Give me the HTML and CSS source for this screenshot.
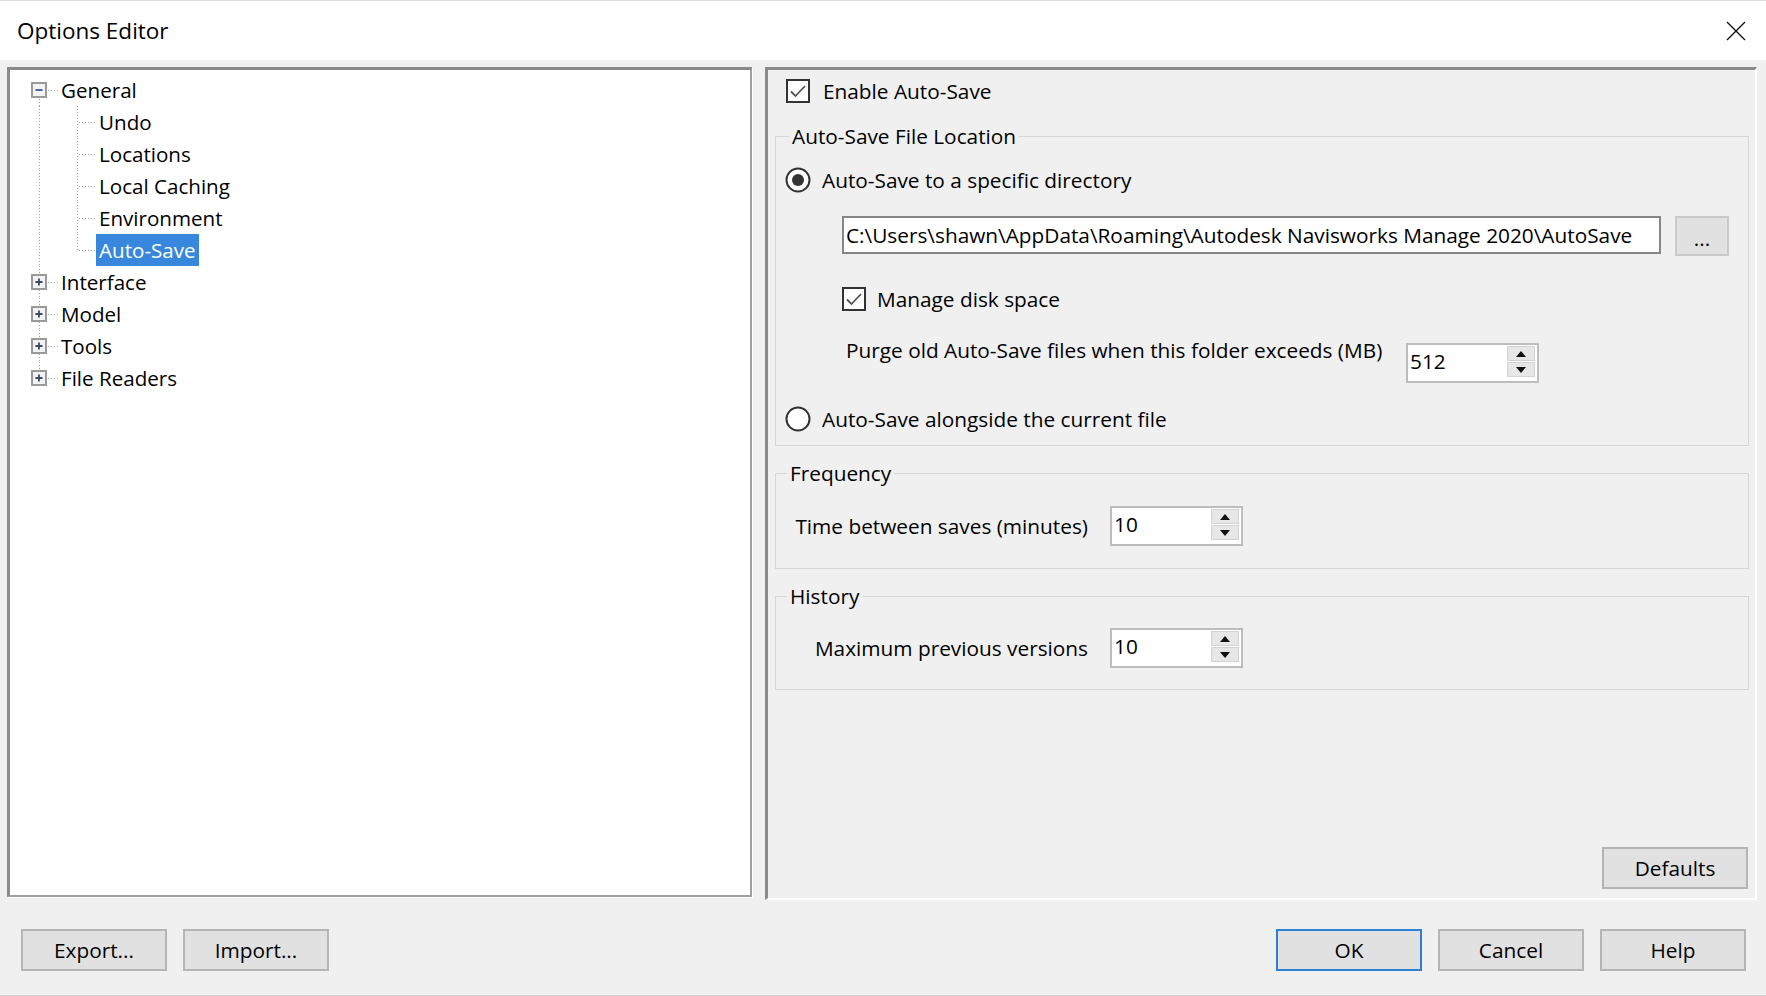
FILE: index.html
```html
<!DOCTYPE html>
<html>
<head>
<meta charset="utf-8">
<title>Options Editor</title>
<link rel="stylesheet" href="styles.css">
</head>
<body>
<div class="window">
  <div class="titlebar">
    <span class="title">Options Editor</span>
    <svg class="close" width="20" height="20" viewBox="0 0 20 20"><path d="M1 1L19 19M19 1L1 19" stroke="#111" stroke-width="1.4" fill="none"/></svg>
  </div>

  <div class="main">
    <div class="tree-panel">
      <div class="tree">
        <div class="row"><span class="gut v-bot"><svg class="exp" width="16" height="16" viewBox="0 0 16 16"><rect x="1" y="1" width="14" height="14" fill="#f3f3f3" stroke="#9a9a9a" stroke-width="2"/><path d="M4.5 8H11.5" stroke="#3b5998" stroke-width="1.8"/></svg></span><span class="hd"></span><span class="lbl">General</span></div>
        <div class="row"><span class="gut v-full"></span><span class="sp"></span><span class="cg cg-full"></span><span class="lbl">Undo</span></div>
        <div class="row"><span class="gut v-full"></span><span class="sp"></span><span class="cg cg-full"></span><span class="lbl">Locations</span></div>
        <div class="row"><span class="gut v-full"></span><span class="sp"></span><span class="cg cg-full"></span><span class="lbl">Local Caching</span></div>
        <div class="row"><span class="gut v-full"></span><span class="sp"></span><span class="cg cg-full"></span><span class="lbl">Environment</span></div>
        <div class="row"><span class="gut v-full"></span><span class="sp"></span><span class="cg cg-top"></span><span class="lbl sel">Auto-Save</span></div>
        <div class="row"><span class="gut v-full"><svg class="exp" width="16" height="16" viewBox="0 0 16 16"><rect x="1" y="1" width="14" height="14" fill="#f3f3f3" stroke="#9a9a9a" stroke-width="2"/><path d="M4.5 8H11.5M8 4.5V11.5" stroke="#3b4a6b" stroke-width="1.8"/></svg></span><span class="hd"></span><span class="lbl">Interface</span></div>
        <div class="row"><span class="gut v-full"><svg class="exp" width="16" height="16" viewBox="0 0 16 16"><rect x="1" y="1" width="14" height="14" fill="#f3f3f3" stroke="#9a9a9a" stroke-width="2"/><path d="M4.5 8H11.5M8 4.5V11.5" stroke="#3b4a6b" stroke-width="1.8"/></svg></span><span class="hd"></span><span class="lbl">Model</span></div>
        <div class="row"><span class="gut v-full"><svg class="exp" width="16" height="16" viewBox="0 0 16 16"><rect x="1" y="1" width="14" height="14" fill="#f3f3f3" stroke="#9a9a9a" stroke-width="2"/><path d="M4.5 8H11.5M8 4.5V11.5" stroke="#3b4a6b" stroke-width="1.8"/></svg></span><span class="hd"></span><span class="lbl">Tools</span></div>
        <div class="row"><span class="gut v-top"><svg class="exp" width="16" height="16" viewBox="0 0 16 16"><rect x="1" y="1" width="14" height="14" fill="#f3f3f3" stroke="#9a9a9a" stroke-width="2"/><path d="M4.5 8H11.5M8 4.5V11.5" stroke="#3b4a6b" stroke-width="1.8"/></svg></span><span class="hd"></span><span class="lbl">File Readers</span></div>
      </div>
    </div>

    <div class="opts-panel">
      <div class="head-row">
        <svg class="cb" width="24" height="24" viewBox="0 0 24 24"><rect x="1" y="1" width="22" height="22" fill="#fff" stroke="#333" stroke-width="2"/><path d="M5 12.5L9.5 17L19 7" fill="none" stroke="#555" stroke-width="1.8"/></svg>
        <span class="cb-text">Enable Auto-Save</span>
      </div>

      <fieldset class="group g-loc">
        <legend>Auto-Save File Location</legend>
        <div class="radio-row r1">
          <svg class="rb" width="26" height="26" viewBox="0 0 26 26"><circle cx="13" cy="13" r="11.5" fill="#fff" stroke="#333" stroke-width="2"/><circle cx="13" cy="13" r="6" fill="#333"/></svg>
          <span>Auto-Save to a specific directory</span>
        </div>
        <div class="path-row">
          <div class="path">C:\Users\shawn\AppData\Roaming\Autodesk Navisworks Manage 2020\AutoSave</div>
          <div class="browse">...</div>
        </div>
        <div class="check-row">
          <svg class="cb" width="24" height="24" viewBox="0 0 24 24"><rect x="1" y="1" width="22" height="22" fill="#fff" stroke="#333" stroke-width="2"/><path d="M5 12.5L9.5 17L19 7" fill="none" stroke="#555" stroke-width="1.8"/></svg>
          <span class="cb-text2">Manage disk space</span>
        </div>
        <div class="purge-row">
          <span class="purge-label">Purge old Auto-Save files when this folder exceeds (MB)</span>
          <div class="spin">
            <span class="spin-val">512</span>
            <span class="spin-btns">
              <span class="sb"><svg width="10" height="6" viewBox="0 0 10 6"><path d="M0 6L5 0L10 6Z" fill="#111"/></svg></span>
              <span class="sb"><svg width="10" height="6" viewBox="0 0 10 6"><path d="M0 0L5 6L10 0Z" fill="#111"/></svg></span>
            </span>
          </div>
        </div>
        <div class="radio-row r2">
          <svg class="rb" width="26" height="26" viewBox="0 0 26 26"><circle cx="13" cy="13" r="11.5" fill="#fff" stroke="#333" stroke-width="2"/></svg>
          <span>Auto-Save alongside the current file</span>
        </div>
      </fieldset>

      <fieldset class="group g-freq">
        <legend>Frequency</legend>
        <div class="field-row">
          <span class="field-label">Time between saves (minutes)</span>
          <div class="spin">
            <span class="spin-val">10</span>
            <span class="spin-btns">
              <span class="sb"><svg width="10" height="6" viewBox="0 0 10 6"><path d="M0 6L5 0L10 6Z" fill="#111"/></svg></span>
              <span class="sb"><svg width="10" height="6" viewBox="0 0 10 6"><path d="M0 0L5 6L10 0Z" fill="#111"/></svg></span>
            </span>
          </div>
        </div>
      </fieldset>

      <fieldset class="group g-hist">
        <legend>History</legend>
        <div class="field-row">
          <span class="field-label">Maximum previous versions</span>
          <div class="spin">
            <span class="spin-val">10</span>
            <span class="spin-btns">
              <span class="sb"><svg width="10" height="6" viewBox="0 0 10 6"><path d="M0 6L5 0L10 6Z" fill="#111"/></svg></span>
              <span class="sb"><svg width="10" height="6" viewBox="0 0 10 6"><path d="M0 0L5 6L10 0Z" fill="#111"/></svg></span>
            </span>
          </div>
        </div>
      </fieldset>

      <div class="spacer"></div>
      <div class="defaults-row"><button class="btn">Defaults</button></div>
    </div>
  </div>

  <div class="footer">
    <div class="fgroup">
      <button class="btn">Export...</button>
      <button class="btn">Import...</button>
    </div>
    <div class="fgroup">
      <button class="btn ok">OK</button>
      <button class="btn">Cancel</button>
      <button class="btn">Help</button>
    </div>
  </div>
</div>
</body>
</html>
```

FILE: styles.css
```css
* { box-sizing: border-box; }
html, body { margin: 0; padding: 0; }
body {
  width: 1766px;
  height: 996px;
  overflow: hidden;
  background: #f0f0f0;
  font-family: "Open Sans", "Noto Sans", sans-serif;
  font-size: 20.8px;
  color: #000;
}
.window { display: flex; flex-direction: column; height: 996px; border-bottom: 1px solid #d4d4d4; }

/* title bar */
.titlebar {
  height: 60px; flex: none; background: #fff;
  border-top: 1px solid #dcdcdc;
  display: flex; align-items: center; justify-content: space-between;
  padding: 0 20px 0 17px;
}
.title { font-size: 22.5px; }
.close { display: block; }

/* main */
.main { flex: none; height: 840px; display: flex; gap: 13px; padding: 7px 9px 0 7px; }

.tree-panel {
  width: 745px; height: 830px; flex: none; background: #fff;
  border-style: solid; border-width: 3px 2px 2px 3px;
  border-color: #8a8a8a #a0a0a0 #a0a0a0 #8a8a8a;
  box-shadow: 1px 1px 0 #fff;
}
.tree { padding: 4px 0 0 21px; font-size: 20.6px; }
.row { display: flex; height: 32px; white-space: nowrap; }
.gut { width: 16px; flex: none; display: flex; align-items: center; justify-content: center; }
.exp { display: block; }
.v-full { background: repeating-linear-gradient(to bottom, #a0a0a0 0 1px, transparent 1px 3px) 8px 0 / 1px 100% no-repeat; }
.v-bot { background: repeating-linear-gradient(to bottom, #a0a0a0 0 1px, transparent 1px 3px) 8px 100% / 1px 50% no-repeat; }
.v-top { background: repeating-linear-gradient(to bottom, #a0a0a0 0 1px, transparent 1px 3px) 8px 0 / 1px 50% no-repeat; }
.hd { width: 11px; flex: none; background: repeating-linear-gradient(to right, #a0a0a0 0 1px, transparent 1px 3px) 1px 50% / 100% 1px no-repeat; }
.sp { width: 30px; flex: none; }
.cg { width: 19px; flex: none; }
.cg-full {
  background:
    repeating-linear-gradient(to bottom, #a0a0a0 0 1px, transparent 1px 3px) 0 0 / 1px 100% no-repeat,
    repeating-linear-gradient(to right, #a0a0a0 0 1px, transparent 1px 3px) 2px 50% / 100% 1px no-repeat;
}
.cg-top {
  background:
    repeating-linear-gradient(to bottom, #a0a0a0 0 1px, transparent 1px 3px) 0 0 / 1px 50% no-repeat,
    repeating-linear-gradient(to right, #a0a0a0 0 1px, transparent 1px 3px) 2px 50% / 100% 1px no-repeat;
}
.lbl { padding: 0 3px; line-height: 32px; height: 32px; }
.lbl.sel { background: #3788dc; color: #fff; }

/* options panel */
.opts-panel {
  flex: 1; height: 833px; display: flex; flex-direction: column;
  border-style: solid; border-width: 3px 2px 2px 3px;
  border-color: #8a8a8a #fff #fff #8a8a8a;
}
.head-row { display: flex; align-items: center; height: 24px; margin: 9px 0 0 18px; }
.cb { display: block; flex: none; }
.cb-text { margin-left: 13px; line-height: 24px; }

.group {
  margin: 0 6px 0 7px; padding: 0;
  border: 1px solid #d6d6d6;
  min-width: 0;
}
.group legend { padding: 0 3px; line-height: 28px; font-size: 20.8px; }
.g-loc { margin-top: 19px; padding-bottom: 13px; }
.g-loc legend { margin-left: 13px; }
.g-freq { margin-top: 13px; padding-bottom: 22px; }
.g-hist { margin-top: 13px; padding-bottom: 21px; }
.g-freq legend, .g-hist legend { margin-left: 11px; }

.radio-row { display: flex; align-items: center; height: 26px; margin-left: 9px; }
.radio-row span { margin-left: 11px; }
.rb { display: block; flex: none; }
.r1 { margin-top: 17px; }
.r2 { margin-top: 23px; }

.path-row { display: flex; align-items: flex-start; margin: 23px 0 0 66px; gap: 14px; }
.path {
  width: 819px; height: 38px; background: #fff;
  border: 2px solid #868686;
  padding-left: 2px; line-height: 34px; white-space: nowrap; overflow: hidden;
}
.browse {
  width: 54px; height: 40px; background: #e1e1e1;
  border: 2px solid #cacaca;
  text-align: center; line-height: 40px;
}
.check-row { display: flex; align-items: center; height: 24px; margin: 31px 0 0 66px; }
.cb-text2 { margin-left: 11px; }

.purge-row { display: flex; align-items: flex-start; margin: 25px 0 0 70px; }
.purge-label { width: 560px; flex: none; line-height: 28px; }
.purge-row .spin { margin-top: 7px; }

.spin {
  width: 133px; height: 40px; flex: none; background: #fff;
  border: 2px solid #bdbdbd;
  display: flex; justify-content: space-between; align-items: stretch;
  padding: 1px 2px 4px 2px;
}
.spin-val { line-height: 30px; padding-top: 0; }
.spin-btns { width: 28px; display: flex; flex-direction: column; gap: 1px; }
.sb {
  flex: 1; background: #e7e7e7; border: 1px solid #d2d2d2;
  display: flex; align-items: center; justify-content: center;
}
.sb svg { display: block; }

.field-row { display: flex; align-items: center; }
.g-freq .field-row { margin-top: 19px; }
.g-hist .field-row { margin-top: 18px; }
.field-label { width: 312px; text-align: right; flex: none; margin-right: 22px; }

.spacer { flex: 1; }
.defaults-row { display: flex; justify-content: flex-end; padding: 0 7px 9px 0; }

/* buttons */
.btn {
  width: 146px; height: 42px;
  font-family: inherit; font-size: 20.8px; color: #000;
  background: #e1e1e1;
  border: 2px solid #b5b5b5;
  border-radius: 0; padding: 0; margin: 0;
}
.btn.ok { border-color: #2f7fd6; }

.footer { flex: 1; display: flex; justify-content: space-between; align-items: flex-start; padding: 29px 20px 0 21px; }
.fgroup { display: flex; gap: 16px; }
```
